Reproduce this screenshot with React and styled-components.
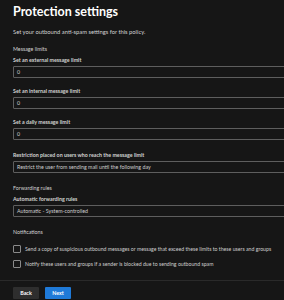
import React from "react";
import styled, { createGlobalStyle } from "styled-components";

const GlobalStyle = createGlobalStyle`
  html, body {
    margin: 0;
    padding: 0;
    background: #161616;
    overflow: hidden;
  }
  body {
    font-family: Lato, "Open Sans", sans-serif;
    color: #d6d6d6;
  }
`;

const Page = styled.div`
  width: 284px;
  height: 300px;
  overflow: hidden;
  background: #161616;
  display: flex;
  flex-direction: column;
`;

const Body = styled.div`
  padding: 3px 0 0 13px;
  width: 300px;
  display: flex;
  flex-direction: column;
`;

const Title = styled.h1`
  margin: 0;
  font-size: 12.5px;
  line-height: 18px;
  font-weight: 700;
  color: #ffffff;
`;

const Text = styled.div`
  margin-top: ${(p) => p.$top || 0}px;
  font-size: ${(p) => p.$size || 5.3}px;
  line-height: 8px;
  font-weight: ${(p) => (p.$strong ? 700 : 400)};
  color: ${(p) => p.$color || "#d2d2d2"};
  white-space: nowrap;
`;

const Field = styled.div`
  margin-top: 2px;
  height: 10px;
  border: 1px solid #5e5e5e;
  border-radius: 1px;
  padding-left: 3px;
  display: flex;
  align-items: center;
  font-size: 5.3px;
  color: #cfcfcf;
  white-space: nowrap;
`;

const CheckRow = styled.label`
  margin-top: ${(p) => p.$top}px;
  display: flex;
  align-items: center;
  gap: 4px;
  height: 8px;
  font-size: 5.2px;
  color: #cfcfcf;
  white-space: nowrap;
`;

const Box = styled.span`
  width: 6px;
  height: 6px;
  border: 1px solid #8a8a8a;
  border-radius: 1px;
  flex: none;
`;

const Divider = styled.div`
  margin-top: 12px;
  height: 1px;
  background: #2a2a2a;
`;

const Footer = styled.div`
  margin-top: 6px;
  padding-left: 13px;
  display: flex;
  gap: 6px;
`;

const Button = styled.button`
  width: 26px;
  height: 12px;
  border: none;
  border-radius: 1px;
  padding: 0;
  font-family: inherit;
  font-size: 5.3px;
  font-weight: 700;
  color: #ffffff;
  background: ${(p) => (p.$primary ? "#1f7ad8" : "#2e2e2e")};
`;

export default function App() {
  return (
    <Page>
      <GlobalStyle />
      <Body>
        <Title>Protection settings</Title>
        <Text $top={7} $size={5.8}>
          Set your outbound anti-spam settings for this policy.
        </Text>
        <Text $top={9}>Message limits</Text>

        <Text $top={3} $strong>Set an external message limit</Text>
        <Field>0</Field>

        <Text $top={9} $strong>Set an internal message limit</Text>
        <Field>0</Field>

        <Text $top={9} $strong>Set a daily message limit</Text>
        <Field>0</Field>

        <Text $top={11} $strong>
          Restriction placed on users who reach the message limit
        </Text>
        <Field>Restrict the user from sending mail until the following day</Field>

        <Text $top={11}>Forwarding rules</Text>
        <Text $top={3} $strong>Automatic forwarding rules</Text>
        <Field>Automatic - System-controlled</Field>

        <Text $top={11}>Notifications</Text>
        <CheckRow $top={9}>
          <Box />
          Send a copy of suspicious outbound messages or message that exceed
          these limits to these users and groups
        </CheckRow>
        <CheckRow $top={7}>
          <Box />
          Notify these users and groups if a sender is blocked due to sending
          outbound spam
        </CheckRow>
      </Body>
      <Divider />
      <Footer>
        <Button>Back</Button>
        <Button $primary>Next</Button>
      </Footer>
    </Page>
  );
}
